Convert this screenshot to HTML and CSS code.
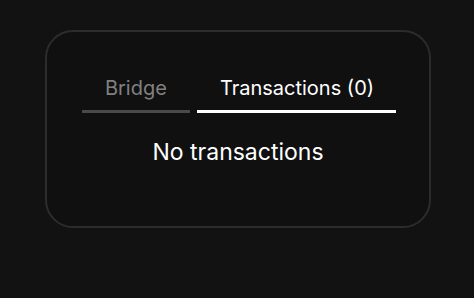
FILE: index.html
```html
<!DOCTYPE html>
<html>
<head>
<meta charset="utf-8">
<link rel="stylesheet" href="styles.css">
</head>
<body>
  <div class="card">
    <div class="tabs">
      <div class="tab">Bridge</div>
      <div class="tab active">Transactions (0)</div>
    </div>
    <div class="empty">No transactions</div>
  </div>
</body>
</html>
```
FILE: styles.css
```css
html, body {
  margin: 0;
  padding: 0;
  background: #121212;
  height: 100%;
}
body {
  font-family: Inter, "Noto Sans", sans-serif;
  padding-top: 30px;
  box-sizing: border-box;
}
.card {
  width: 386px;
  height: 198px;
  margin: 0 0 0 45px;
  box-sizing: border-box;
  border: 2px solid #2c2c2c;
  border-radius: 28px;
  background: #101010;
  display: flex;
  flex-direction: column;
  align-items: center;
  padding-top: 44px;
}
.tabs {
  display: flex;
  gap: 7px;
  margin-left: 2px;
}
.tab {
  padding: 0 23px 9px;
  font-size: 20px;
  line-height: 25px;
  color: #808080;
  border-bottom: 3px solid #4a4a4a;
}
.tab.active {
  padding-right: 22px;
  color: #ffffff;
  border-bottom-color: #ffffff;
}
.empty {
  margin-top: 25px;
  font-size: 23px;
  line-height: 28px;
  color: #ffffff;
}
```
